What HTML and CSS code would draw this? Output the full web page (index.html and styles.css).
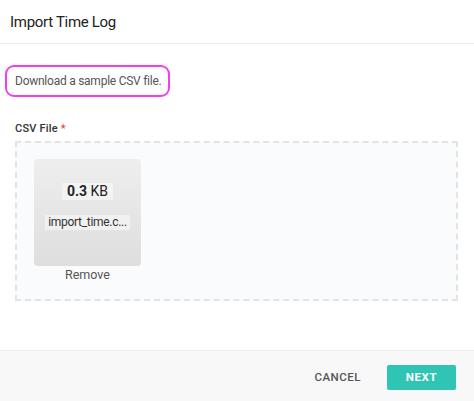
FILE: index.html
```html
<!DOCTYPE html>
<html>
<head>
<meta charset="utf-8">
<link rel="stylesheet" href="styles.css">
</head>
<body>
<div class="modal">
  <header class="modal-header">
    <h1 class="modal-title">Import Time Log</h1>
  </header>
  <main class="modal-body">
    <div class="sample-link">Download a sample CSV file.</div>
    <label class="field-label">CSV File <span class="req">*</span></label>
    <div class="dropzone">
      <div class="preview">
        <div class="thumb">
          <div class="size"><strong>0.3</strong> KB</div>
          <div class="filename">import_time.c...</div>
        </div>
        <div class="remove">Remove</div>
      </div>
    </div>
  </main>
  <footer class="modal-footer">
    <button class="btn btn-cancel">CANCEL</button>
    <button class="btn btn-next">NEXT</button>
  </footer>
</div>
</body>
</html>
```
FILE: styles.css
```css
html, body {
  margin: 0;
  padding: 0;
  background: #ffffff;
}
body {
  font-family: Roboto, "Liberation Sans", Arial, sans-serif;
  color: #333;
  width: 474px;
  height: 401px;
  overflow: hidden;
}
.modal {
  display: flex;
  flex-direction: column;
  height: 401px;
}
.modal-header {
  height: 44px;
  border-bottom: 1px solid #ececec;
  display: flex;
  align-items: center;
  padding-left: 10px;
  box-sizing: border-box;
}
.modal-title {
  margin: 0 0 0 0;
  font-size: 15px;
  font-weight: 400;
  letter-spacing: -0.3px;
  color: #222;
}
.modal-body {
  flex: 1;
  display: flex;
  flex-direction: column;
  align-items: flex-start;
  padding: 21px 16px 0 15px;
}
.sample-link {
  margin-left: -10px;
  height: 32px;
  box-sizing: border-box;
  border: 2px solid #f040ee;
  border-radius: 9px;
  padding: 0 7px 0 8px;
  display: flex;
  align-items: center;
  font-size: 12px;
  letter-spacing: -0.25px;
  color: #555;
}
.field-label {
  margin-top: 25px;
  font-size: 11px;
  font-weight: 500;
  color: #333;
  line-height: 14px;
  letter-spacing: 0.2px;
}
.req {
  color: #e5484d;
}
.dropzone {
  margin-top: 5px;
  align-self: stretch;
  height: 160px;
  box-sizing: border-box;
  border: 2px dashed #e3e3e3;
  background: #fafbfd;
  padding: 16px 17px;
}
.preview {
  width: 107px;
  display: flex;
  flex-direction: column;
  align-items: center;
}
.thumb {
  width: 107px;
  height: 107px;
  border-radius: 4px;
  background: linear-gradient(to bottom, #eeeeee, #dedede);
  display: flex;
  flex-direction: column;
  align-items: center;
}
.size {
  margin-top: 24px;
  height: 17px;
  line-height: 17px;
  padding: 0 5px;
  background: rgba(255, 255, 255, 0.45);
  font-size: 14px;
  color: #222;
}
.size strong {
  font-weight: 700;
}
.filename {
  margin-top: 15px;
  height: 15px;
  line-height: 15px;
  padding: 0 3px;
  background: rgba(255, 255, 255, 0.45);
  font-size: 12px;
  letter-spacing: -0.3px;
  color: #333;
}
.remove {
  margin-top: 1px;
  font-size: 12.5px;
  line-height: 16px;
  color: #555;
}
.modal-footer {
  height: 51px;
  box-sizing: border-box;
  border-top: 1px solid #ececec;
  background: #f8f8f8;
  display: flex;
  justify-content: flex-end;
  align-items: center;
  padding: 2px 18px 0 0;
  gap: 18px;
}
.btn {
  font-family: Roboto, "Liberation Sans", Arial, sans-serif;
  border: none;
  cursor: pointer;
  font-size: 11.5px;
  height: 25px;
  border-radius: 2px;
}
.btn-cancel {
  background: transparent;
  color: #555;
  font-weight: 500;
  letter-spacing: 0.5px;
  padding: 0 8px;
}
.btn-next {
  width: 69px;
  background: #2fc4b4;
  color: #fff;
  font-weight: 700;
  letter-spacing: 0.6px;
  padding: 0;
}
```
